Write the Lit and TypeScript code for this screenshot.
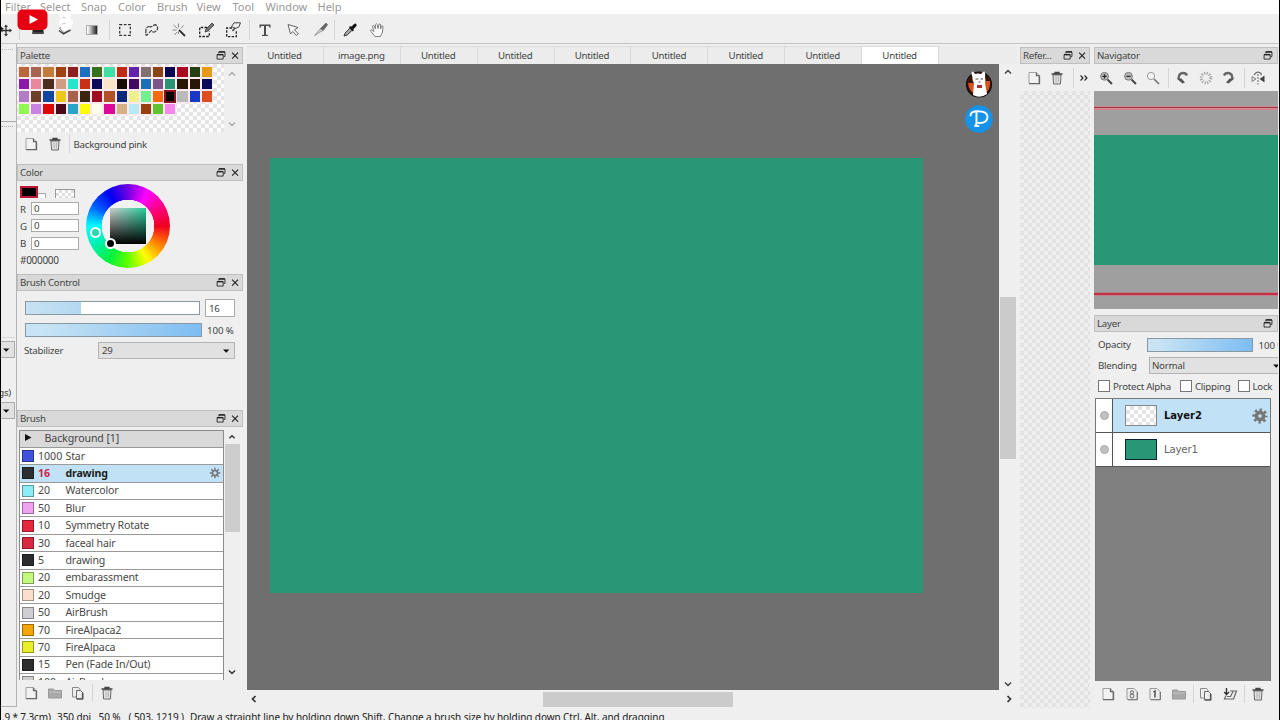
import { LitElement, html, svg, css } from "lit";
import { customElement } from "lit/decorators.js";
import { classMap } from "lit/directives/class-map.js";

const ICONS: Record<string, any> = {
  page: svg`<path d="M3 2.500h7.500l2.500 3v8H3z" fill="#f2f2f2" stroke="#999" stroke-width=".9"/><path d="M3 13.700h10.500V5.500M10.500 2.700v3h2.700" fill="none" stroke="#666" stroke-width="1.300"/>`,
  page8: svg`<path d="M3 2.500h7l3 3v8H3z" fill="#ededed" stroke="#999"/><path d="M4 13.800h9.500V6" fill="none" stroke="#777"/><circle cx="8" cy="6.300" r="1.600" fill="none" stroke="#666"/><circle cx="8" cy="10" r="2" fill="none" stroke="#666"/>`,
  page1: svg`<path d="M3 2.500h7l3 3v8H3z" fill="#ededed" stroke="#999"/><path d="M4 13.800h9.500V6" fill="none" stroke="#777"/><path d="M6.500 6L8 5v6.500" fill="none" stroke="#444" stroke-width="1.400"/>`,
  trash: svg`<path d="M4 5h8l-.6 9H4.600z" fill="#e6e6e6" stroke="#666"/><path d="M2.500 4h11M6 3.500v-1h4v1" fill="none" stroke="#444" stroke-width="1.300"/><path d="M7 6.500v6M9.300 6.500v6" stroke="#aaa"/>`,
  folder: svg`<path d="M1.500 4h5l1.300 1.500h6.700v7.500h-13z" fill="#a9a9a9" stroke="#999"/><path d="M2 7h12" stroke="#c4c4c4"/>`,
  copy: svg`<path d="M2.500 2.500h6l1.500 2v7.500H2.500z" fill="#eee" stroke="#888"/><path d="M6.500 5.500h4l2.500 2.500v6H6.500z" fill="#eee" stroke="#666"/><path d="M12.500 8v5.800H7" fill="none" stroke="#555" stroke-width="1.300"/>`,
  merge: svg`<path d="M4.500 2v6M2.200 6l2.300 2.500L7 6" fill="none" stroke="#333" stroke-width="1.400"/><path d="M8 5h6.500l-3 8h-9l1.500-3.500M11 5.500l-2.500 5H5" fill="none" stroke="#666" stroke-width="1.200"/>`,
  move: svg`<path d="M0 2l6 5-6 2z" fill="#222"/><path d="M8 4v9M3.500 8.500h9" stroke="#333" stroke-width="1.300"/><path d="M8 2.500l2 2.500H6zM8 14.500l2-2.500H6zM14 8.500l-2.500-2v4zM2 8.500l2.500-2v4z" fill="#333"/>`,
  fill: svg`<path d="M2.500 5h11v7h-11z" fill="#222"/><path d="M2.500 10h11v2h-11z" fill="#444"/>`,
  bucket: svg`<path d="M2.500 6l4.500 5 6-4-4-3z" fill="#eee" stroke="#888"/><path d="M2 8.500l4.500 3.300L13.500 8" fill="none" stroke="#444" stroke-width="1.500"/>`,
  gradient: svg`<defs><linearGradient id="g"><stop offset=".1" stop-color="#fff"/><stop offset="1" stop-color="#111"/></linearGradient></defs><path d="M2.500 3.500h11v9h-11z" fill="url(#g)" stroke="#aaa"/>`,
  marquee: svg`<path d="M2.700 2.700h10.600v10.600H2.700z" fill="none" stroke="#333" stroke-width="1.300" stroke-dasharray="2.600 1.600"/>`,
  lasso: svg`<path d="M4.500 4.500Q7 5.500 9.500 3.500t4 1.500q.7 3-2 4.500t-3-.5-4 2.500-2.500-2.500Q1.500 6 4.500 4.500z" fill="none" stroke="#444" stroke-width="1.300" stroke-dasharray="4 1"/>`,
  wand: svg`<path d="M8 8l6 6" stroke="#333" stroke-width="1.800"/><path d="M6.500 6.500L2.500 3M7.500 5.500V1.500M5.500 8H1.500M6 10l-2.500 3M10 6.500L12.500 3.500M7.500 9.500v2.500" stroke="#888"/>`,
  selpen: svg`<path d="M9 5.500H1.700v9h9.600v-5" fill="none" stroke="#222" stroke-width="1.300" stroke-dasharray="2.500 1.300"/><path d="M7 10l1-3 6-6 2 2-6 6z" fill="#777" stroke="#333" stroke-width=".8"/>`,
  selerase: svg`<path d="M7 6H1.700v8.700h9.600V9" fill="none" stroke="#222" stroke-width="1.300" stroke-dasharray="2.500 1.300"/><path d="M6.500 4.500L9 .8h6.500l-1.500 4-3.500 1.700z" fill="#eee" stroke="#444"/><path d="M10 6L7.500 9" stroke="#444" stroke-width="1.500"/>`,
  text: svg`<path d="M2.500 2.500h11v3.300h-1L11.800 4H9v8.700l2 .4v.9H5v-.9l2-.4V4H4.200l-.7 1.800h-1z" fill="#4d4d4d"/>`,
  arrow: svg`<path d="M3 2.500l10 3-3.500 2.300 3.800 4-2 1.700L7.800 9.500 5.500 12z" fill="#f5f5f5" stroke="#666"/>`,
  knife: svg`<path d="M1.500 13.500L8 6l5-5 1.500 1.500L11 8 7 10z" fill="#d8d8d8" stroke="#888" stroke-width=".8"/><path d="M7 7l6-6 1.800 1.500L10 8.500z" fill="#666"/>`,
  dropper: svg`<path d="M2 14l1.200-3L8 6l2.200 2.200-5 4.800z" fill="#aaa" stroke="#333"/><path d="M7 5l1-.8 1.700.3L12 2q2-1 2.500.5T13.500 5L11.500 7l.2 1.500-1 1z" fill="#151515"/>`,
  hand: svg`<path d="M6 14.500L2 9.500q-1-2 .6-1.800L5 9.500l-1.500-5q.3-1.800 1.700-.5L6.500 7 6.300 2.500q1-1.800 1.900 0L9 6.500l1-4.200q1.300-1 1.700.6L11.500 7l1-3q1.500-.8 1.500.9L13.500 10l-2 4.500z" fill="#f8f8f8" stroke="#808080"/>`,
  zoomin: svg`<path d="M9.500 9.500L14 14" stroke="#444" stroke-width="2"/><circle cx="6.500" cy="6.300" r="3.900" fill="#bbb" stroke="#777"/><path d="M6.500 4.200v4.200M4.400 6.300h4.200" stroke="#222" stroke-width="1.200"/>`,
  zoomout: svg`<path d="M9.500 9.500L14 14" stroke="#444" stroke-width="2"/><circle cx="6.500" cy="6.300" r="3.900" fill="#bbb" stroke="#777"/><path d="M4.400 6.300h4.200" stroke="#222" stroke-width="1.200"/>`,
  zoom: svg`<path d="M9 9l5 5" stroke="#777" stroke-width="1.700"/><circle cx="6" cy="6" r="3.600" fill="#f5f5f5" stroke="#999"/>`,
  rotl: svg`<path d="M13 5.500Q12 2.800 8.500 3 4.500 3.500 4.700 9" fill="none" stroke="#666" stroke-width="2.300"/><path d="M2.500 8.500h5L11 12.500l-2.500 1z" fill="#555"/>`,
  rotr: svg`<path d="M3 5.500Q4 2.800 7.500 3q4 .5 3.800 6" fill="none" stroke="#666" stroke-width="2.300"/><path d="M13.500 8.500h-5L5 12.500l2.500 1z" fill="#555"/>`,
  spin: svg`<circle cx="8" cy="8" r="4.800" fill="none" stroke="#aaa" stroke-width="3" stroke-dasharray="1.300 1.213"/>`,
  flip: svg`<path d="M8 4v10.500" stroke="#666" stroke-dasharray="2 1"/><path d="M9.500 9l5-3.500v7z" fill="#444"/><path d="M6 9L2 6.500v5z" fill="#ddd" stroke="#888"/><path d="M4 5q3.500-5 7-1.500l.5 1.500" fill="none" stroke="#666" stroke-width="1.300"/>`,
  more: svg`<path d="M4.500 5.500L7 8l-2.500 2.500M8.500 5.500L11 8l-2.500 2.500" fill="none" stroke="#222" stroke-width="1.100"/>`,
  float: svg`<path d="M5.500 5V3.500h7v5H11" fill="none" stroke="#222"/><path d="M5.500 3.200h7" stroke="#222" stroke-width="1.500"/><path d="M3.500 6.500h7v5h-7z" fill="none" stroke="#222"/><path d="M3.500 6.400h7" stroke="#222" stroke-width="1.500"/>`,
  close: svg`<path d="M4.700 4.200l6.800 6.800M11.500 4.200L4.700 11" stroke="#222" stroke-width="1.300"/>`,
  up: svg`<path d="M5 9.500L8 6.500l3 3" fill="none" stroke="currentColor" stroke-width="1.500"/>`,
  down: svg`<path d="M5 6.500L8 9.500l3-3" fill="none" stroke="currentColor" stroke-width="1.500"/>`,
  left: svg`<path d="M9.500 5L6.500 8l3 3" fill="none" stroke="currentColor" stroke-width="1.700"/>`,
  right: svg`<path d="M6.500 5L9.500 8l-3 3" fill="none" stroke="currentColor" stroke-width="1.700"/>`,
  caret: svg`<path d="M5 6.500h6.400L8.200 9.700z" fill="#111"/>`,
  play: svg`<path d="M5 4L11.500 7.500 5 11z" fill="#111"/>`,
  gear: svg`<circle cx="8" cy="8" r="6.300" fill="none" stroke="#777" stroke-width="2.600" stroke-dasharray="2.474 2.474" stroke-dashoffset="1.200"/><circle cx="8" cy="8" r="3.600" fill="none" stroke="#777" stroke-width="3.600"/>`,
  slimgear: svg`<path d="M8 1v14M1 8h14M3 3l10 10M13 3L3 13" stroke="#777" stroke-width="1.900"/><circle cx="8" cy="8" r="3.400" fill="#c1e2f6" stroke="#777" stroke-width="2.200"/>`,
};

const icon = (name: string, cls = "") =>
  html`<svg class="ic ${cls}" viewBox="0 0 16 16">${ICONS[name]}</svg>`;

const MENU: [string, string][] = [
  ["Filter", "m1"], ["Select", "m2"], ["Snap", "m3"], ["Color", "m4"], ["Brush", "m5"],
  ["View", "m6"], ["Tool", "m7"], ["Window", "m8"], ["Help", "m9"],
];

const PALETTE = [
  "#b9683b #a8644f #c17e3a #a04210 #8f2020 #1b70c0 #34701e #3fe0a8 #bc2c12 #6224a8 #80706e #8a4312 #050550 #a80a22 #244012 #e59a18",
  "#8c1aa8 #e8889c #4c2e1e #d09c84 #28e4cc #c83018 #0a0a58 #f8e4c8 #1c0c06 #440a60 #1c70b8 #7c5488 #289474 #281606 #281608 #0a0a58",
  "#b07cc4 #6c4028 #0f46a0 #ecc81c #a8624c #3c2412 #a00a20 #b45028 #0c2878 #f0f08c #70f090 #f46a0c #000000 #bababa #1838c8 #dc5020",
  "#90f850 #c884e0 #dc0808 #4c0818 #28a4c8 #fcfc08 #fcfcec #dc0898 #d4b084 #b8e8f4 #98400f #60c430 #f488ec",
].map((r) => r.split(" "));

const BRUSHES: [string, string, string][] = [
  ["#4053dd", "1000", "Star"], ["#2d2f31", "16", "drawing"], ["#8eecf4", "20", "Watercolor"],
  ["#eea3f0", "50", "Blur"], ["#e5273f", "10", "Symmetry Rotate"], ["#d9283f", "30", "faceal hair"],
  ["#2d2d2f", "5", "drawing"], ["#c3f77f", "20", "embarassment"], ["#f8e0cc", "20", "Smudge"],
  ["#ceced3", "50", "AirBrush"], ["#f2a60c", "70", "FireAlpaca2"], ["#e9ed2c", "70", "FireAlpaca"],
  ["#2d2d2d", "15", "Pen (Fade In/Out)"], ["#cfcfcf", "100", "AirBrush"],
];

const TABS = ["Untitled", "image.png", "Untitled", "Untitled", "Untitled", "Untitled", "Untitled", "Untitled", "Untitled"];

@customElement("app-root")
export class AppRoot extends LitElement {
  static styles = css`
    :host { display: block; width: 1280px; height: 720px; overflow: hidden; }
    * { box-sizing: border-box; }
    .app {
      position: relative; width: 1280px; height: 720px; overflow: hidden; background: #efefef; color: #444;
      border-left: 1px solid #000; border-right: 1px solid #000;
      display: grid; grid-template-rows: 14px 30px 664px 12px;
      font: 9.7px "Noto Sans", "Open Sans", sans-serif; letter-spacing: -.25px; white-space: nowrap;
    }
    .ic { width: 16px; height: 16px; flex: none; display: block; }
    .menu { background: #fff; display: flex; color: #999; font-size: 11px; line-height: 14px; letter-spacing: 0; }
    .menu span { flex: none; padding-left: 4px; }
    .m1 { width: 35px; } .m2 { width: 41px; } .m3 { width: 37px; } .m4 { width: 39px; }
    .m5 { width: 39.5px; } .m6 { width: 36px; } .m7 { width: 33px; } .m8 { width: 52px; }
    .tools { display: flex; align-items: center; border-bottom: 1px solid #c4c4c4; padding-top: 3px; }
    .tools .ic { margin-right: 11px; }
    .tools .first { margin-left: -3px; margin-right: 8px; }
    .sep { width: 1px; height: 20px; background: #d4d4d4; flex: none; }
    .tools .sep { margin: 0 7px 0 -3px; }
    .tools .s0 { margin-right: 10px; }
    .tools .wide { margin-right: 12px; }
    .tools .tight { margin-right: 8px; }
    .body { display: flex; }
    .col { flex: none; display: flex; flex-direction: column; }
    .edge { width: 16px; height: 663px; border-right: 1px solid #b4b4b4; border-bottom: 1px solid #b4b4b4; }
    .edge .dots { border-top: 1px dotted #bbb; width: 12px; margin-top: 5px; height: 72px; }
    .edge .dots2 { border-top: 1px solid #aaa; padding-top: 4px; height: 213px; }
    .edge .dots2 i { display: block; border-top: 1px dotted #aaa; width: 12px; }
    .drop { height: 17px; width: 14px; border: 1px solid #aaa; border-left: 0; background: #e1e1e1; display: flex; align-items: center; flex: none; }
    .drop .ic { margin-left: -3px; }
    .gap { height: 43px; margin-top: 1px; padding-top: 26px; line-height: 16px; width: 10px; display: flex; justify-content: flex-end; }
    .edge .line { border-top: 1px solid #d6d6d6; margin: 3px 0 0; width: 14px; height: 4px; }
    .left { width: 226px; padding-top: 3px; }
    .head {
      height: 17px; flex: none; border: 1px solid #bfbfbf; background: #d9d9d9; display: flex; align-items: center;
      padding: 1px 0 0 2px; line-height: 14px;
    }
    .head .fx { margin-left: auto; }
    .head .ic { width: 14px; height: 14px; margin-top: -1px; }
    .palette { height: 100px; }
    .palrow { display: flex; height: 68px; }
    .checker { background: repeating-conic-gradient(#e4e4e4 0 25%, #fdfdfd 0 50%) 0 0 / 8px 8px; }
    .swatches { width: 207px; height: 68px; padding: 2px 0 0 1px; }
    .srow { display: flex; }
    .sw { width: 12.2px; height: 12.2px; border: 1px solid #fbe9ee; }
    .sw.on { border: 2px solid #8c1220; }
    .vbar { display: flex; flex-direction: column; justify-content: space-between; width: 16px; color: #aaa; padding-top: 2px; }
    .palfoot { height: 30px; display: flex; align-items: center; padding: 0 0 6px 6px; gap: 8px; }
    .palfoot .sep { height: 18px; margin: 0 -4.5px 0 -2px; }
    .color { height: 93px; display: flex; padding: 5px 0 0 2px; }
    .rgb { width: 67px; }
    .chips { height: 14px; display: flex; align-items: start; margin-left: 1px; }
    .fg { width: 18px; height: 12px; background: #000; border: 2px solid #c01830; }
    .bg { width: 8px; height: 5px; margin-top: 7px; background: #fff; border: 1px solid #aaa; border-left: 0; border-bottom: 0; }
    .tr { width: 20px; height: 9px; margin: 3px 0 0 9px; border: 1px solid #999; border-bottom: 0; background: repeating-conic-gradient(#ddd 0 25%, #fff 0 50%) 0 0 / 6px 6px; }
    .chan { display: flex; align-items: center; height: 17.3px; padding-left: 1px; }
    .chan span { width: 11px; padding-top: 1px; }
    .chan b { width: 48px; height: 13px; border: 1px solid #aaa; background: #fff; font-weight: 400; line-height: 12px; padding-left: 2px; }
    .hex { line-height: 15px; padding: 1.5px 0 0 1px; font-size: 10px; letter-spacing: -.3px; }
    .wheel {
      width: 84px; height: 84px; border-radius: 50%; margin-top: -2.500px; flex: none; position: relative;
      background: radial-gradient(circle, #f2f2f2 0 26px, transparent 26.5px), conic-gradient(from 90deg, #f00020, #ff8000, yellow, #60ff00, #00f040, #00f0b0, cyan, #0060ff, #0000f0, #7000e0, magenta, #ff0080, #f00020);
    }
    .sv { position: absolute; left: 24px; top: 24px; width: 36px; height: 36px; background: linear-gradient(transparent, #000), linear-gradient(90deg, #d0d0d0, #25cf9c); }
    .dot { position: absolute; width: 11px; height: 11px; border: 2px solid #fff; border-radius: 50%; }
    .dot.h { left: 4px; top: 43px; background: #2ad8ae; }
    .dot.s { left: 19px; top: 54px; background: #000; }
    .ctl { height: 119px; padding: 8px 8px 0 8px; display: flex; flex-direction: column; gap: 7px; }
    .ctl > div { display: flex; align-items: center; }
    .r1 { height: 18px; gap: 5px; } .r2 { height: 14px; gap: 5px; margin-top: -1px; } .r3 { height: 17px; margin-top: -2px; }
    .slider { height: 14px; border: 1px solid #8899a4; background: #fff; }
    .bar { height: 100%; background: linear-gradient(90deg, #c8e2f3, #b4d8f1); }
    .bar.full { background: linear-gradient(100deg, #c8e4f4 10%, #7cbcf2); }
    .s1 { width: 175px; } .s2 { width: 177px; flex: none; }
    .num { width: 30px; height: 18px; border: 1px solid #aaa; background: #fff; padding: 1px 0 0 3px; line-height: 16px; }
    .pct { padding-top: 1px; letter-spacing: -.1px; }
    .stab { width: 73px; margin-left: -1px; padding-left: 0; margin-right: 1px; }
    .sel { height: 17px; border: 1px solid #b4b4b4; background: #e1e1e1; display: flex; align-items: center; justify-content: space-between; padding-left: 3px; }
    .sel.st { width: 137px; }
    .brush { display: flex; height: 253px; padding: 3px 0 0 2px; }
    .list { width: 205px; height: 250px; overflow: hidden; border: 1px solid #8c8c8c; border-width: 1px 1px 0; background: #fff; }
    .item { height: 17.42px; display: flex; align-items: center; border-bottom: 1px solid #9a9a9a; padding: 0 0 0 2px; font-size: 10.6px; letter-spacing: -.15px; line-height: 15px; color: #484848; }
    .item i { width: 12px; height: 12px; border: 1px solid rgba(0,0,0,.35); margin-right: 4px; }
    .item span { width: 27.5px; letter-spacing: 0; }
    .item .ic { width: 12px; height: 12px; margin: 0 2px 0 auto; }
    .item.on { background: #c1e2f6; font-weight: 700; color: #1c1c1c; }
    .item.on span { color: #d0244c; }
    .group { height: 16.8px; background: #d9d9d9; display: flex; align-items: center; border-bottom: 1px solid #999; font-size: 10.6px; letter-spacing: -.1px; gap: 8.500px; line-height: 14px; padding-bottom: 1px; }
    .vs { width: 15px; display: flex; flex-direction: column; align-items: center; color: #333; margin-left: .5px; }
    .vs .t { width: 15px; height: 88px; background: #cdcdcd; }
    .vs .ic:first-child { height: 14px; }
    .vs .ic:last-child { margin-top: auto; }
    .foot { height: 26px; display: flex; align-items: center; padding-left: 6px; gap: 7.7px; }
    .foot .sep { margin: 0 -2px; height: 18px; }
    .center { width: 770px; margin-left: 4px; padding-top: 2px; }
    .tabs { height: 18px; display: flex; background: #ececec; }
    .tab { width: 76.9px; flex: none; border: 1px solid #dadada; border-left: 0; border-bottom: 0; text-align: center; line-height: 18px; color: #444; padding-right: 1px; }
    .tab.on { background: #fff; }
    .work { display: flex; height: 626px; }
    .canvas { width: 752px; background: #6f6f6f; padding: 94px 0 0 23px; position: relative; }
    .art { width: 653px; height: 435px; background: #299776; }
    .badges { position: absolute; left: 718px; top: 6px; display: flex; flex-direction: column; gap: 7px; }
    .badges svg { width: 28px; height: 28px; display: block; }
    .vmain { width: 18px; display: flex; flex-direction: column; align-items: center; color: #444; }
    .vmain .t { width: 16px; height: 162px; background: #cbcbcb; margin-top: 217px; }
    .vmain .ic:last-child { margin-top: auto; margin-bottom: -2px; }
    .hbar { height: 18px; display: flex; align-items: center; color: #333; }
    .hbar .ic:first-child { margin-left: -1px; margin-right: 281px; }
    .hbar .ic:last-child { margin-left: 268px; }
    .hbar .t { width: 191px; height: 15px; background: #cbcbcb; }
    .ref { width: 70px; margin-left: 3px; padding-top: 3px; }
    .ref .bar2 { height: 27px; display: flex; align-items: center; padding-left: 6px; gap: 7px; }
    .ref .bar2 .sep { margin: 0 -5px 0 1px; }
    .ref .fill { height: 617px; background: repeating-conic-gradient(#e2e2e2 0 25%, #efefef 0 50%) 0 0 / 8px 8px; }
    .right { width: 184px; margin-left: 4px; padding-top: 3px; overflow: hidden; }
    .right .bar3 { height: 27px; display: flex; align-items: center; padding-left: 4px; gap: 7.5px; }
    .right .bar3 .sep { margin: 0 -2px 0 -1px; }
    .right .head .fx { margin-right: 2px; }
    .nav { height: 218px; background: #9f9f9f; display: flex; flex-direction: column; }
    .nav .red { height: 4px; background: linear-gradient(#c8868e 0 1px, #a83448 1px 2px, #d0848e 2px); }
    .nav .n1 { margin-top: 15px; }
    .nav .view { margin-top: 25px; height: 130px; background: #299776; }
    .nav .n2 { margin-top: 27px; background: linear-gradient(#b48088 0 1px, #c03048 1px 3px, #c08088 3px); }
    .lay { margin-top: 6px; }
    .row { display: flex; align-items: center; padding-left: 4px; }
    .op { height: 25px; } .bl { height: 17px; } .ck { height: 24px; }
    .op .l { width: 48px; flex: none; } .bl .l { width: 51px; flex: none; }
    .op .slider { width: 106px; margin-right: 6px; flex: none; }
    .sel.nm { width: 136px; flex: none; padding-left: 2px; }
    .ck i { width: 12px; height: 12px; flex: none; border: 1px solid #777; background: #fff; margin-right: 3px; }
    .ck span { flex: none; }
    .ck .c1 { width: 67px; } .ck .c2 { width: 42.5px; }
    .layers { display: flex; height: 283px; margin-left: 1px; }
    .ll { width: 176px; background: #808080; border-left: 1px solid #777; border-right: 1px solid #777; flex: none; }
    .layer { height: 34.5px; display: flex; background: #fff; border-bottom: 1px solid #555; font: 10.2px "DejaVu Sans", sans-serif; align-items: center; letter-spacing: 0; }
    .layer .eye { width: 17px; align-self: stretch; background: #fff; border-right: 1px solid #555; display: flex; align-items: center; justify-content: center; }
    .layer .eye i { width: 9px; height: 9px; border-radius: 50%; background: #c0c0c0; border: 1px solid #aaa; }
    .layer .th { width: 32px; height: 21px; border: 1px solid #888; margin: 0 7px 0 12px; }
    .layer .th.g { background: #299776; border-color: #123; }
    .layer.on { background: #c1e2f6; color: #111; font-weight: 700; border-top: 1px solid #777; font-size: 10px; }
    .layer.on .ic { margin: 1px 2px 0 auto; }
    .layer.off { color: #666; letter-spacing: -.2px; }
    .right .foot .sep { margin: 0 -3px 0 -2px; }
    .arrows { color: #aaa; margin-left: 4px; display: flex; flex-direction: column; justify-content: space-between; }
    .status { color: #222; font-size: 10px; letter-spacing: -.08px; line-height: 16px; padding-top: 1px; display: flex; }
    .status span { flex: none; }
    .q1 { width: 56px; letter-spacing: -.15px; padding-left: 1px; } .q2 { width: 41.5px; } .q3 { width: 30px; } .q4 { width: 61.5px; }
    .yt { position: absolute; left: 15px; top: 8px; width: 32px; height: 23px; }
    .puff { position: absolute; left: 54px; top: 10px; width: 20px; height: 22px; }
    .op .l, .bl .l { margin-left: 0; }
    .row.op, .row.bl { padding-left: 4px; gap: 0; }
    .op .slider, .sel.nm { margin-left: 0; }
    .row.op .l { width: 48.5px; }
  `;

  head(title: string, close = true) {
    return html`<div class="head"><span>${title}</span>${icon("float", "fx")}${close ? icon("close") : ""}</div>`;
  }

  render() {
    return html`<div class="app">
      <div class="menu">${MENU.map(([t, c]) => html`<span class=${c}>${t}</span>`)}</div>
      <div class="tools">
        ${icon("move", "first")}<div class="sep s0"></div>${icon("fill")}${icon("bucket")}${icon("gradient", "wide")}
        <div class="sep"></div>${["marquee", "lasso", "wand", "selpen", "selerase"].map((n) => icon(n))}
        <div class="sep"></div>${icon("text", "wide")}${icon("arrow", "wide")}${icon("knife", "tight")}
        <div class="sep"></div>${icon("dropper")}${icon("hand")}
      </div>
      <div class="body">
        <div class="col edge">
          <div class="dots"></div><div class="dots2"><i></i></div>
          <div class="line"></div>
          <div class="drop">${icon("caret")}</div>
          <div class="gap">gs)</div>
          <div class="drop">${icon("caret")}</div>
        </div>
        <div class="col left">
          ${this.head("Palette")}
          <div class="palette">
            <div class="palrow">
              <div class="swatches checker">${PALETTE.map((r) => html`<div class="srow">${r.map((c) => html`<div class=${classMap({ sw: true, on: c === "#000000" })} style="background:${c}"></div>`)}</div>`)}</div>
              <div class="vbar">${icon("up")}${icon("down")}</div>
            </div>
            <div class="palfoot">${icon("page")}${icon("trash")}<div class="sep"></div><span>Background pink</span></div>
          </div>
          ${this.head("Color")}
          <div class="color">
            <div class="rgb">
              <div class="chips"><div class="fg"></div><div class="bg"></div><div class="tr"></div></div>
              ${["R", "G", "B"].map((c) => html`<div class="chan"><span>${c}</span><b>0</b></div>`)}
              <div class="hex">#000000</div>
            </div>
            <div class="wheel"><div class="sv"></div><div class="dot h"></div><div class="dot s"></div></div>
          </div>
          ${this.head("Brush Control")}
          <div class="ctl">
            <div class="r1"><div class="slider s1"><div class="bar" style="width:32%"></div></div><div class="num">16</div></div>
            <div class="r2"><div class="slider s2"><div class="bar full"></div></div><span class="pct">100 %</span></div>
            <div class="r3"><span class="stab">Stabilizer</span><div class="sel st">29${icon("caret")}</div></div>
          </div>
          ${this.head("Brush")}
          <div class="brush">
            <div class="list">
              <div class="group">${icon("play")}<span>Background [1]</span></div>
              ${BRUSHES.map(([c, n, t], k) => html`<div class=${classMap({ item: true, on: k === 1 })}><i style="background:${c}"></i><span>${n}</span>${t}${k === 1 ? icon("slimgear") : ""}</div>`)}
            </div>
            <div class="vs">${icon("up")}<div class="t"></div>${icon("down")}</div>
          </div>
          <div class="foot">${icon("page")}${icon("folder")}${icon("copy")}<div class="sep"></div>${icon("trash")}</div>
        </div>
        <div class="col center">
          <div class="tabs">${TABS.map((t, k) => html`<div class=${classMap({ tab: true, on: k === 8 })}>${t}</div>`)}</div>
          <div class="work">
            <div class="canvas"><div class="art"></div>
              <div class="badges">
                <svg viewBox="0 0 28 28"><circle cx="14" cy="14.500" r="12.500" fill="#3a1408" stroke="#111" stroke-width="1.200"/><path d="M3 13q1 8 7 11l-1-11zM25 11q1 9-6 13l1-13z" fill="#d4551f"/><path d="M7 1.500q2 0 3 2.500 3-1 6 0 2-3 3.500-2.500 1 2 .5 5.500.7 3 0 6l2 11q-7 5-14 1l1-12q-2-3-1.500-6-1.500-3-.5-5.500z" fill="#fff"/><path d="M10.500 9h3M15.500 9h2.500M13.500 12h2" stroke="#555"/><path d="M12 15h5v3h-5z" fill="#a83038"/></svg>
                <svg viewBox="0 0 28 28"><circle cx="14" cy="14" r="13.800" fill="#1693e8"/><path d="M5.500 10.500Q5.500 6.300 13 6.300q9 0 9.500 5.200 0 6.500-8 6.500-2 0-3-.6M11.500 7.500v10q0 3-2 3.500h4" fill="none" stroke="#fff" stroke-width="1.900" stroke-linecap="round"/></svg>
              </div>
            </div>
            <div class="vmain">${icon("up")}<div class="t"></div>${icon("down")}</div>
          </div>
          <div class="hbar">${icon("left")}<div class="t"></div>${icon("right")}</div>
        </div>
        <div class="col ref">
          ${this.head("Refer...")}
          <div class="bar2">${icon("page")}${icon("trash")}<div class="sep"></div>${icon("more")}</div>
          <div class="fill"></div>
        </div>
        <div class="col right">
          ${this.head("Navigator", false)}
          <div class="bar3">${icon("zoomin")}${icon("zoomout")}${icon("zoom")}<div class="sep"></div>${icon("rotl")}${icon("spin")}${icon("rotr")}<div class="sep"></div>${icon("flip")}</div>
          <div class="nav"><div class="red n1"></div><div class="view"></div><div class="red n2"></div></div>
          <div class="lay">${this.head("Layer", false)}</div>
          <div class="row op"><span class="l">Opacity</span><div class="slider"><div class="bar full"></div></div><span class="pct">100 %</span></div>
          <div class="row bl"><span class="l">Blending</span><div class="sel nm">Normal${icon("caret")}</div></div>
          <div class="row ck"><i></i><span class="c1">Protect Alpha</span><i></i><span class="c2">Clipping</span><i></i><span>Lock</span></div>
          <div class="layers">
            <div class="ll">
              <div class="layer on"><div class="eye"><i></i></div><div class="th checker"></div>Layer2${icon("gear")}</div>
              <div class="layer off"><div class="eye"><i></i></div><div class="th g"></div>Layer1</div>
            </div>
            <div class="arrows">${icon("up")}${icon("down")}</div>
          </div>
          <div class="foot">${icon("page")}${icon("page8")}${icon("page1")}${icon("folder")}<div class="sep"></div>${icon("copy")}${icon("merge")}<div class="sep"></div>${icon("trash")}</div>
        </div>
      </div>
      <div class="status"><span class="q1">.9 * 7.3cm)</span><span class="q2">350 dpi</span><span class="q3">50 %</span><span class="q4">( 503, 1219 )</span><span>Draw a straight line by holding down Shift, Change a brush size by holding down Ctrl, Alt, and dragging</span></div>
      <svg class="yt" viewBox="0 0 32 23"><rect x="1.500" y="1.500" width="30" height="20.500" rx="5" fill="#e60012"/><path d="M13.500 7l8.500 4.500-8.500 4.500z" fill="#fff"/></svg>
      <svg class="puff" viewBox="0 0 20 22"><path d="M5 2l3 2 3-1 3 1 1-2 1 4-1 3q4 1 3 5l-2 2q1 3-3 4-2 2-5 0-3-1-2-4-3-2-2-5l2-2-1-3z" fill="#fff"/><path d="M7 7l4 1M11 13l-4 1" stroke="#ccc" fill="none"/></svg>
    </div>`;
  }
}
